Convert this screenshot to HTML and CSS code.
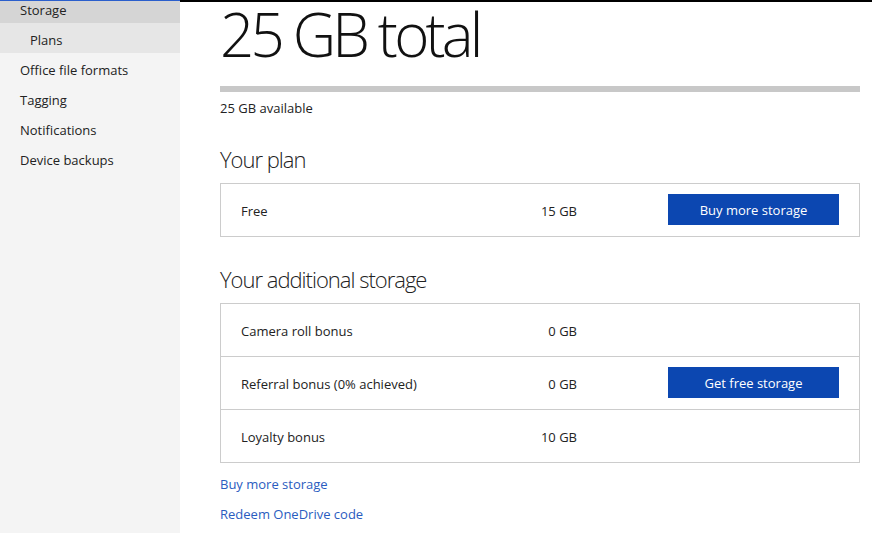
FILE: index.html
```html
<!DOCTYPE html>
<html lang="en">
<head>
<meta charset="utf-8">
<title>Storage - OneDrive options</title>
<link rel="stylesheet" href="styles.css">
</head>
<body>
<div class="page">
  <nav class="sidebar">
    <ul class="nav-list">
      <li class="nav-item nav-item--selected">Storage</li>
      <li class="nav-item nav-item--sub">Plans</li>
      <li class="nav-item">Office file formats</li>
      <li class="nav-item">Tagging</li>
      <li class="nav-item">Notifications</li>
      <li class="nav-item">Device backups</li>
    </ul>
  </nav>
  <main class="content">
    <h1 class="total">25 GB total</h1>
    <div class="usage-bar"></div>
    <p class="available">25 GB available</p>

    <h2 class="section-title">Your plan</h2>
    <div class="panel">
      <div class="row">
        <span class="row-label">Free</span>
        <span class="row-value">15 GB</span>
        <span class="row-action"><button class="btn">Buy more storage</button></span>
      </div>
    </div>

    <h2 class="section-title section-title--spaced">Your additional storage</h2>
    <div class="panel">
      <div class="row">
        <span class="row-label">Camera roll bonus</span>
        <span class="row-value">0 GB</span>
        <span class="row-action"></span>
      </div>
      <div class="row">
        <span class="row-label">Referral bonus (0% achieved)</span>
        <span class="row-value">0 GB</span>
        <span class="row-action"><button class="btn">Get free storage</button></span>
      </div>
      <div class="row">
        <span class="row-label">Loyalty bonus</span>
        <span class="row-value">10 GB</span>
        <span class="row-action"></span>
      </div>
    </div>

    <ul class="links">
      <li><a class="link" href="#">Buy more storage</a></li>
      <li><a class="link" href="#">Redeem OneDrive code</a></li>
    </ul>
  </main>
</div>
</body>
</html>
```

FILE: styles.css
```css
* { box-sizing: border-box; }

html, body {
  margin: 0;
  padding: 0;
  height: 100%;
  overflow: hidden;
  background: #ffffff;
}

body {
  font-family: "Open Sans", "Noto Sans", "Liberation Sans", sans-serif;
  font-size: 13px;
  color: #222222;
}

.page {
  display: flex;
  height: 100%;
}

.sidebar {
  width: 180px;
  flex: 0 0 180px;
  background: #f4f4f4;
  border-top: 1px solid #2b5fcc;
  overflow: hidden;
}

.nav-list {
  list-style: none;
  margin: -8px 0 0;
  padding: 0;
}

.nav-item {
  height: 30px;
  padding: 4px 0 0 20px;
  line-height: 26px;
  color: #222222;
  white-space: nowrap;
}

.nav-item--selected { background: #d5d5d5; }

.nav-item--sub {
  background: #e6e6e6;
  padding-left: 30px;
}

.content {
  flex: 1 1 auto;
  border-top: 2px solid #000000;
  padding: 0 12px 0 40px;
  min-width: 0;
}

.total {
  margin: -4px 0 0;
  font-size: 60px;
  font-weight: 300;
  line-height: 72px;
  color: #111111;
  letter-spacing: -3.8px;
  white-space: nowrap;
}

.usage-bar {
  margin-top: 16px;
  height: 6px;
  background: #c8c8c8;
}

.available {
  margin: 6px 0 0;
  line-height: 20px;
}

.section-title {
  margin: 26px 0 9px;
  font-size: 22px;
  font-weight: 300;
  line-height: 30px;
  color: #222222;
  letter-spacing: -1px;
}

.section-title--spaced { margin-top: 27px; }

.panel {
  border: 1px solid #cccccc;
}

.row {
  display: grid;
  grid-template-columns: 1fr auto 171px;
  column-gap: 91px;
  align-items: center;
  height: 52px;
  padding: 2px 20px 0;
}

.row + .row { border-top: 1px solid #cccccc; height: 53px; }

.row-value { text-align: right; }

.btn {
  display: block;
  width: 171px;
  height: 31px;
  border: 0;
  margin: 0 0 3px;
  padding: 0;
  background: #0c47b1;
  color: #ffffff;
  font-family: inherit;
  font-size: 13px;
}

.links {
  list-style: none;
  margin: 6px 0 0;
  padding: 0;
}

.links li { line-height: 30px; }

.link {
  color: #2a5cc0;
  text-decoration: none;
}
```
